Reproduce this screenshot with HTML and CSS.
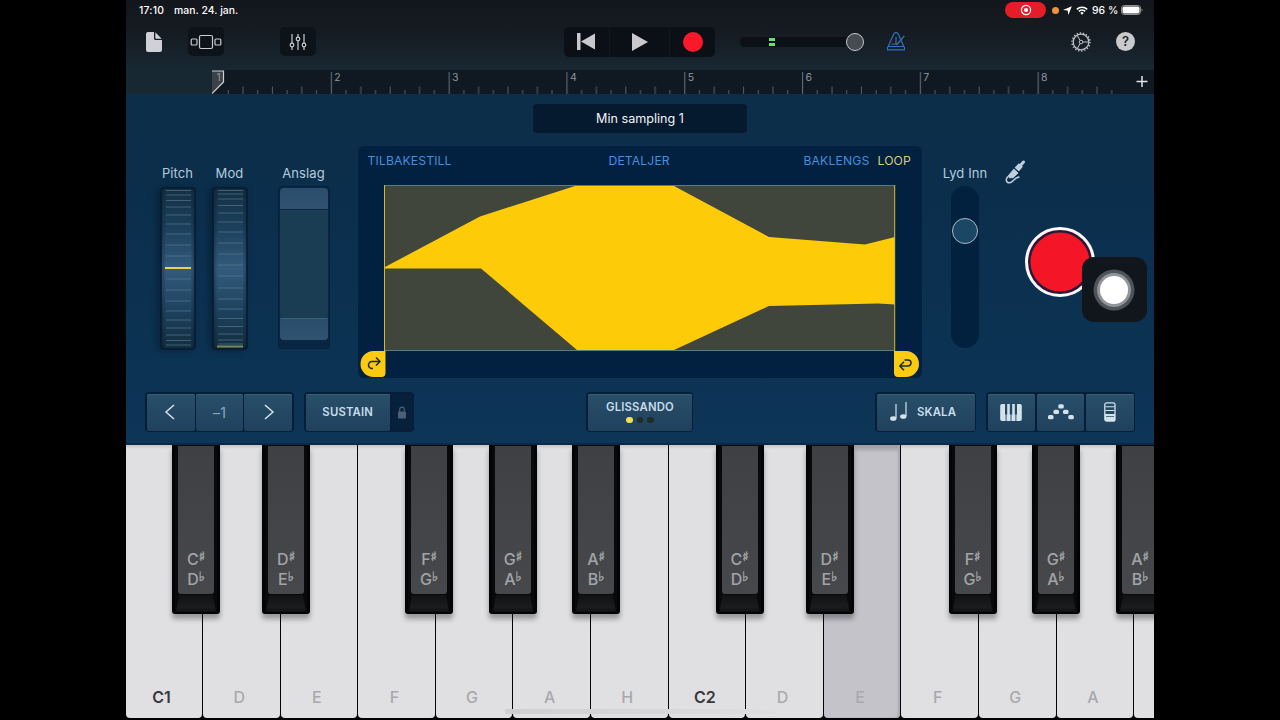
FILE: index.html
```html
<!DOCTYPE html>
<html lang="no">
<head>
<meta charset="utf-8">
<title>Min sampling 1</title>
<link rel="stylesheet" href="styles.css">
</head>
<body>
<div class="app">
  <header class="top">
    <div class="status">
      <span class="time">17:10</span><span class="date">man. 24. jan.</span>
      <span class="rec-pill"><svg width="12" height="12" viewBox="0 0 12 12"><circle cx="6" cy="6" r="4.6" fill="none" stroke="#fff" stroke-width="1.2"/><circle cx="6" cy="6" r="2.1" fill="#fff"/></svg></span>
      <span class="mic-dot"></span>
      <svg class="loc" width="9" height="9" viewBox="0 0 9 9"><path d="M8.800.2 5.400 9 4.600 4.600 0 4z" fill="#fff"/></svg>
      <svg class="wifi" width="12" height="9" viewBox="0 0 12 9" fill="none" stroke="#fff" stroke-width="1.5"><path d="M.8 3.400a7.400 7.400 0 0 1 10.400 0M2.800 5.400a4.600 4.600 0 0 1 6.400 0"/><path d="m6 8.800-1.700-1.900a2.500 2.500 0 0 1 3.400 0z" fill="#fff" stroke="none"/></svg>
      <span class="pct">96 %</span>
      <svg width="22" height="10" viewBox="0 0 22 10"><rect x=".5" y=".5" width="19" height="9" rx="2.600" fill="none" stroke="#8d9093"/><rect x="1.500" y="1.500" width="17" height="7" rx="1.700" fill="#fff"/><path d="M20.600 3.500v3q1-.5 1-1.500t-1-1.500" fill="#8d9093"/></svg>
    </div>
    <div class="toolbar">
      <svg class="doc" width="16" height="20" viewBox="0 0 16 20"><path d="M2 0h6v6.500Q8 8 9.500 8H16v10q0 2-2 2H2q-2 0-2-2V2q0-2 2-2z" fill="#cfd1d6"/><path d="M9.300.3 15.700 6.700H10.200Q9.300 6.700 9.300 5.800z" fill="#cfd1d6"/></svg>
      <span class="dark views"><svg width="32" height="16" viewBox="0 0 32 16" fill="none" stroke="#c9cbd0" stroke-width="1.200"><rect x="9.500" y="1.500" width="13" height="13" rx="1.500"/><rect x="1.200" y="5" width="5.800" height="6" rx="1"/><rect x="25" y="5" width="5.800" height="6" rx="1"/></svg></span>
      <span class="dark mixer"><svg width="18" height="18" viewBox="0 0 18 18" fill="none" stroke="#c9cbd0" stroke-width="1.200"><path d="M3 1v9M3 14v3M9 1v3M9 8v9M15 1v9M15 14v3"/><circle cx="3" cy="12" r="1.800"/><circle cx="9" cy="6" r="1.800"/><circle cx="15" cy="12" r="1.800"/></svg></span>
      <div class="transport">
        <span class="t1"><svg width="18" height="17" viewBox="0 0 18 17" fill="#c9c9cd"><path d="M0 0h3.500v17H0zM18 .5v16L4 8.500z"/></svg></span>
        <span class="t2"><svg width="16" height="18" viewBox="0 0 16 18"><path d="M0 0v18l16-9z" fill="#c9c9cd"/></svg></span>
        <span class="t3"><i class="rec"></i></span>
      </div>
      <div class="volume"><i class="led"></i><i class="vol-knob"></i></div>
      <svg class="metro" width="20" height="19" viewBox="0 0 20 19" fill="none" stroke="#2f70bd" stroke-width="1.200" stroke-linejoin="round"><path d="M1.500 17.800v-2.500l.8-1L8 1.600q.8-.9 2-.9t2 .9l5.700 12.700.8 1v2.500zM2 14.500h16"/><path d="M10 5v6.500M10.500 13 18.300 4M5.500 12h5" /></svg>
      <svg class="gear" width="20" height="20" viewBox="0 0 20 20" fill="none" stroke="#bfc3c8"><circle cx="10" cy="10" r="7.800" stroke-width="1.200"/><circle cx="10" cy="10" r="9" stroke-width="1.500" stroke-dasharray="1.300 1.842"/><circle cx="10" cy="10" r="1.800"/><path d="M12 10h5.700M9 8.400 6.200 3.300M9 11.600l-2.800 5.100"/></svg>
      <span class="help">?</span>
    </div>
    <div class="ruler">
      <svg class="ticks" width="942" height="24" viewBox="0 0 942 24">
        <defs><pattern id="bar" x="1" y="0" width="117.800" height="24" patternUnits="userSpaceOnUse"><path d="M.6 2v22" stroke="#66717a"/><path d="M15.200 20v4M44.700 20v4M74.100 20v4M103.500 20v4M30 16.500V24M59.400 16.500V24M88.800 16.500V24" stroke="#66717a" stroke-width=".8"/></pattern></defs>
        <path d="M9 0h898v24H9z" fill="url(#bar)"/>
        <path d="M0 1h12v11L0 24z" fill="#3b424a"/><path d="M0 1h11.500v11L0 23.500" fill="none" stroke="#cdd0d3" stroke-width="1.200"/>
        <path d="M924.500 11.500h11M930 6v11" stroke="#e2e4e6" stroke-width="1.500"/>
      </svg>
      <div class="bars"><span>1</span><span>2</span><span>3</span><span>4</span><span>5</span><span>6</span><span>7</span><span>8</span></div>
    </div>
  </header>

  <main class="instrument">
    <div class="name">Min sampling 1</div>
    <div class="controls">
      <div class="ctl">
        <span class="lbl">Pitch</span>
        <svg class="wheel" width="36" height="163" viewBox="0 0 36 163"><defs><linearGradient id="w" x2="0" y2="1"><stop stop-color="#142f42"/><stop offset=".25" stop-color="#1c405c"/><stop offset=".5" stop-color="#345b7c"/><stop offset=".78" stop-color="#1c405c"/><stop offset="1" stop-color="#122d3d"/></linearGradient><linearGradient id="e"><stop stop-color="#06182b" stop-opacity=".4"/><stop offset=".14" stop-color="#06182b" stop-opacity="0"/><stop offset=".86" stop-color="#06182b" stop-opacity="0"/><stop offset="1" stop-color="#06182b" stop-opacity=".4"/></linearGradient></defs><rect x="1" y="1" width="34" height="161" rx="3" fill="url(#w)"/><rect x="1" y="1" width="34" height="161" rx="3" fill="url(#e)" stroke="#071b30" stroke-width="1.500"/><path d="M6 3.500h25M6 8h25M6 13.500h25M6 20h25M6 28h25M6 37h25M6 47h25M6 58h25M6 69h25M6 92h25M6 103h25M6 114h25M6 124h25M6 133h25M6 141h25M6 148h25M6 153.500h25M6 158h25" stroke="#587b90" stroke-opacity=".65"/><path d="M5 81h26" stroke="#eed14c" stroke-width="2"/></svg>
      </div>
      <div class="ctl">
        <span class="lbl">Mod</span>
        <svg class="wheel" width="36" height="163" viewBox="0 0 36 163"><rect x="1" y="1" width="34" height="161" rx="3" fill="url(#w)"/><rect x="1" y="1" width="34" height="161" rx="3" fill="url(#e)" stroke="#071b30" stroke-width="1.500"/><path d="M6 3.500h25M6 7h25M6 12h25M6 18.500h25M6 26h25M6 35h25M6 45h25M6 56h25M6 67h25M6 78h25M6 89h25M6 101h25M6 112h25M6 122h25M6 131.500h25M6 139.500h25M6 147h25M6 153h25M6 157h25" stroke="#587b90" stroke-opacity=".65"/><path d="M5 159.500h26" stroke="#7c8754" stroke-width="2"/></svg>
      </div>
      <div class="ctl velocity">
        <span class="lbl">Anslag</span>
        <div class="range"><i class="cap"></i><i class="span"></i><i class="cap low"></i></div>
      </div>
      <section class="sample">
        <div class="sample-head"><span class="reset">TILBAKESTILL</span><span class="details">DETALJER</span><span class="reverse">BAKLENGS</span><span class="loop">LOOP</span></div>
        <svg class="wave" width="564" height="203" viewBox="358 175 564 203">
          <rect x="385" y="186" width="510" height="164" fill="#40463b"/>
          <path d="M385 267 480 216.500 575 186H674L769 237 865 244.500 895 237V304.500L878 303.500 769 306 674 350H577L481 268.500H385z" fill="#fdcb08"/>
          <path d="M385 185.500h510M385 350.500h510" stroke="#527e85"/>
          <path d="M384.500 185v180M894.700 185v180" stroke="#d6b92d"/>
          <path d="M385.500 351v22q0 4-4 4h-8a13 13 0 0 1 0-26zM894 351h12a13 13 0 0 1 0 26h-8q-4 0-4-4z" fill="#fbca11"/>
          <g fill="none" stroke="#1b2a2c" stroke-width="1.500"><path d="M373 368.500h-1a3.500 3.500 0 0 1 0-7H379.500M376 357.500l4 4-4 4"/><path d="M904.500 360h3.500a2.800 2.800 0 0 1 0 6H900M904 361.800l-4.200 4.200 4.200 4.200"/></g>
        </svg>
      </section>
      <div class="ctl input">
        <span class="lbl">Lyd Inn</span>
        <div class="gain"><i class="gain-knob"></i></div>
      </div>
      <div class="record">
        <svg class="jack" width="22" height="26" viewBox="0 0 22 26"><path d="m18.500 3-3.500 4" stroke="#c0cfdd" stroke-width="3" stroke-linecap="round"/><path d="m15.800 6-4.300 4.800" stroke="#c0cfdd" stroke-width="5.500"/><path d="m8.800 10.200 4.200 3.800-5 4.700H4.300l-1.300-1.500z" fill="#c0cfdd" stroke="#c0cfdd" stroke-linejoin="round"/><path d="M2.800 17.500C-.3 21 2 24.800 5.500 23.500S9.500 18.500 14.500 18" fill="none" stroke="#c0cfdd" stroke-width="1.500"/><path d="m9 8.800 5.500 4.700" stroke="#0b2b49"/></svg>
        <div class="big-rec"></div>
        <div class="touch"><i></i></div>
      </div>
    </div>
    <div class="buttons">
      <div class="group octave">
        <span><svg width="12" height="16" viewBox="0 0 12 16"><path d="M10 1 2 8l8 7"/></svg></span><span class="value">–1</span><span class="up"><svg width="12" height="16" viewBox="0 0 12 16"><path d="m2 1 8 7-8 7"/></svg></span>
      </div>
      <div class="group sustain"><span>SUSTAIN</span><span class="lock"><svg width="10" height="13" viewBox="0 0 10 13"><rect class="lock-body" x="1" y="5.500" width="8" height="7" rx="1"/><path class="shackle" d="M2.700 6V3.500a2.300 2.300 0 0 1 4.600 0V6"/></svg></span></div>
      <div class="group gliss"><span><b>GLISSANDO</b><em><i class="on"></i><i></i><i></i></em></span></div>
      <div class="group scale"><span><svg width="17" height="20" viewBox="0 0 17 20"><path d="M6 2v14M16 0v14" stroke-width="1.200"/><ellipse cx="3.300" cy="16.500" rx="3.200" ry="2.300" fill="#d4e2ec" stroke="none"/><ellipse cx="13.300" cy="14.500" rx="3.200" ry="2.300" fill="#d4e2ec" stroke="none"/></svg>SKALA</span></div>
      <div class="group modes">
        <span><svg width="22" height="17" viewBox="0 0 22 17"><path d="M2 0h3v10.500h2.200V0h2.600v10.500h2.400V0h2.600v10.500H17V0h3q1.800 0 1.800 1.800v13.400Q21.800 17 20 17H2Q.2 17 .2 15.200V1.800Q.2 0 2 0z" fill="#d4e2ec" stroke="none"/><path d="M6.100 10v7M11 10v7M15.900 10v7" stroke="#315472" stroke-width="1"/></svg></span>
        <span><svg width="26" height="16" viewBox="0 0 26 16"><g stroke="none" fill="#d4e2ec"><rect y="11" width="5.500" height="4.200" rx="1.500"/><rect x="5.500" y="5.700" width="5.500" height="4.200" rx="1.500"/><rect x="10.300" y=".3" width="5.500" height="4.200" rx="1.500"/><rect x="15" y="5.700" width="5.500" height="4.200" rx="1.500"/><rect x="20.300" y="11" width="5.500" height="4.200" rx="1.500"/></g></svg></span>
        <span><svg width="12" height="20" viewBox="0 0 12 20"><rect x=".8" y=".8" width="10.200" height="18.400" rx="2" stroke-width="1.300"/><path d="M1.500 4.800h9M1.500 8.500h9" stroke-width="1.100"/><path d="M1 12h10v7H1z" fill="#d4e2ec" stroke="none"/><path d="M2 14.500h8" stroke="#527186" stroke-width="1"/></svg></span>
      </div>
    </div>
  </main>

  <div class="keyboard">
    <div class="white first root">C1</div><div class="white">D</div><div class="white">E</div><div class="white">F</div><div class="white">G</div><div class="white">A</div><div class="white">H</div><div class="white root">C2</div><div class="white">D</div><div class="white pressed">E</div><div class="white">F</div><div class="white">G</div><div class="white">A</div><div class="white"></div>
    <div class="black" style="left:46px"><div><p>C<sup>♯</sup></p><p>D<sup>♭</sup></p></div></div>
    <div class="black" style="left:136px"><div><p>D<sup>♯</sup></p><p>E<sup>♭</sup></p></div></div>
    <div class="black" style="left:279px"><div><p>F<sup>♯</sup></p><p>G<sup>♭</sup></p></div></div>
    <div class="black" style="left:363px"><div><p>G<sup>♯</sup></p><p>A<sup>♭</sup></p></div></div>
    <div class="black" style="left:446px"><div><p>A<sup>♯</sup></p><p>B<sup>♭</sup></p></div></div>
    <div class="black" style="left:589.5px"><div><p>C<sup>♯</sup></p><p>D<sup>♭</sup></p></div></div>
    <div class="black" style="left:679.5px"><div><p>D<sup>♯</sup></p><p>E<sup>♭</sup></p></div></div>
    <div class="black" style="left:822.5px"><div><p>F<sup>♯</sup></p><p>G<sup>♭</sup></p></div></div>
    <div class="black" style="left:906px"><div><p>G<sup>♯</sup></p><p>A<sup>♭</sup></p></div></div>
    <div class="black" style="left:990px"><div><p>A<sup>♯</sup></p><p>B<sup>♭</sup></p></div></div>
    <div class="home"></div>
  </div>
</div>
</body>
</html>
```
FILE: styles.css
```css
* { box-sizing: border-box; }
body { margin: 0; background: #000; font-family: Inter, "Liberation Sans", sans-serif; }
svg { display: block; flex: none; }
i, em, b { font-style: normal; display: block; }
.app { width: 1028px; height: 720px; margin-left: 126px; overflow: hidden; background: #000; display: flex; flex-direction: column; }

.top { height: 94px; background: linear-gradient(#13171c, #151b22 35%, #182832 75%); }
.status { height: 20px; padding: 0 10px 0 13px; display: flex; align-items: center; color: #fff; font-size: 10.4px; font-weight: 500; white-space: nowrap; }
.time { width: 35px; flex: none; letter-spacing: .2px; }
.date { width: 831px; flex: none; letter-spacing: .05px; }
.rec-pill { width: 41px; height: 16px; border-radius: 8px; background: #e41d29; display: flex; align-items: center; justify-content: center; flex: none; }
.mic-dot { width: 7px; height: 7px; border-radius: 50%; background: #ec943b; margin-left: 6px; flex: none; }
.loc { margin-left: 4px; }
.wifi { margin-left: 4px; }
.pct { margin-left: 4px; width: 29px; flex: none; letter-spacing: .05px; }

.toolbar { height: 50px; display: flex; align-items: center; padding: 0 19px 7px 20px; }
.dark { height: 29px; border-radius: 5px; background: #0c1319; display: flex; align-items: center; justify-content: center; }
.views { width: 36px; margin-left: 26px; }
.mixer { width: 36px; margin-left: 56px; }
.transport { margin-left: 248px; width: 151px; height: 30px; border-radius: 5px; background: #0b1016; display: flex; flex: none; }
.transport span { display: flex; align-items: center; justify-content: center; }
.transport svg, .rec { flex: none; }
.t1 { width: 46px; border-right: 1px solid #11181f; padding-right: 1px; }
.t2 { width: 60px; border-right: 1px solid #11181f; }
.t3 { width: 45px; }
.rec { width: 20px; height: 20px; border-radius: 50%; background: #fb1828; }
.volume { margin-left: 24px; width: 125px; height: 19px; display: flex; align-items: center; justify-content: space-between; padding-left: 30px; background: radial-gradient(circle at 5px 5px, #0c1117 5px, transparent 5.500px) 1px 5px / 10px 10px no-repeat, linear-gradient(#0c1117, #0c1117) 6px 5px / 112px 10px no-repeat; }
.led { width: 6px; height: 8px; background: linear-gradient(#6fdd75 3px, #0c1117 3px 5px, #6fdd75 5px); }
.vol-knob { width: 18px; height: 18px; border-radius: 50%; border: 1px solid #c4c7c9; background: #454c51; }
.metro { margin-left: 22px; }
.gear { margin-left: auto; }
.help { margin-left: 25px; width: 19px; height: 19px; border-radius: 50%; background: #c9cace; color: #202429; font-size: 13px; font-weight: 600; line-height: 19px; text-align: center; }

.ruler { height: 24px; margin-left: 86px; background: #101922; display: grid; }
.ruler > * { grid-area: 1 / 1; }
.bars { display: flex; padding-left: 4.500px; color: #8d969c; font-size: 10.5px; line-height: 15px; }
.bars span { width: 117.8px; flex: none; }

.instrument { height: 351px; background: linear-gradient(#0d2e48, #0b2e4c 30%, #0d3557); border-bottom: 2px solid #0a2a48; }
.name { width: 214px; height: 29px; margin: 10px auto 0; border-radius: 4px; background: #051a2f; color: #f2f5f8; font-size: 12.6px; line-height: 29px; text-align: center; }
.controls { display: flex; height: 232px; margin-top: 13px; padding-left: 26px; }
.ctl { width: 52px; padding-top: 18px; display: flex; flex-direction: column; align-items: center; flex: none; }
.lbl { height: 22px; margin-right: 1px; font-size: 13px; line-height: 18px; color: #b4cadf; white-space: nowrap; letter-spacing: .1px; }
.wheel { filter: drop-shadow(-3px 1px 3px rgba(3, 17, 30, .45)); margin-top: .5px; }
.velocity { margin-left: 22px; width: 52px; }
.range { width: 52px; height: 163px; border: 1.500px solid #08213b; border-radius: 4px; background: #082544; display: flex; flex-direction: column; padding: 1px; }
.cap { height: 22px; background: linear-gradient(#294d6c, #315371); border-radius: 4px 4px 1px 1px; border-bottom: 1px solid #0b263d; }
.span { height: 108px; background: #1b3d54; }
.low { border: 0; border-top: 1px solid #3b6078; border-radius: 1px 1px 4px 4px; }
.sample { width: 564px; height: 232px; margin-left: 28px; border-radius: 6px; background: #02203f; flex: none; }
.sample-head { height: 29px; padding: 0 9.500px; display: flex; align-items: center; font-size: 12.2px; color: #4590db; letter-spacing: .12px; }
.reset { width: 241px; }
.details { width: 195px; }
.reverse { width: 74px; }
.loop { color: #d9cc7c; }
.input { margin-left: 17px; }
.input .lbl { margin-right: 0; }
.gain { width: 28px; height: 162px; border-radius: 14px; background: #02213f; padding: 32px 1px 0; }
.gain-knob { width: 26px; height: 26px; border-radius: 50%; border: 1px solid #a5bac7; background: #194764; }
.record { position: relative; padding: 13px 0 0 14px; flex: none; }
.big-rec { margin: 42px 0 0 20px; width: 70px; height: 70px; border-radius: 50%; border: 3px solid #f8fbfd; background: #f41526; box-shadow: inset 0 0 0 2.500px #251a3b; }
.touch { position: absolute; left: 91px; top: 111px; width: 65px; height: 65px; border-radius: 12px; background: #11151c; display: flex; align-items: center; justify-content: center; }
.touch i { width: 28px; height: 28px; margin-right: 1px; border-radius: 50%; background: #fff; box-shadow: 0 0 0 3px #90959b, 0 0 0 6.500px #4e535a; }

.buttons { display: flex; margin-top: 14px; padding-left: 19px; }
.group { display: flex; height: 40px; padding: 1.500px; gap: 1.500px; border-radius: 4px; background: #061e38; flex: none; }
.group > span { display: flex; align-items: center; justify-content: center; flex: 1; border-radius: 2px; background: linear-gradient(#294f69, #1f415e); box-shadow: inset 0 1px #386078; color: #c9dde9; font-size: 11.3px; font-weight: 600; letter-spacing: .2px; }
.group svg { fill: none; stroke: #d4e2ec; stroke-width: 1.500; }
.group .lock-body { fill: #4d6078; stroke: none; }
.group .shackle { stroke: #4d6078; stroke-width: 1.200; }
.octave { width: 149px; }
.octave > span:first-child { padding-right: 2px; }
.octave > .up { padding-left: 2px; }
.group .value { font-size: 14px; font-weight: 400; color: #8ba9bd; }
.sustain { width: 110px; margin-left: 10px; }
.group > .lock { flex: 0 0 21px; background: #07203b; box-shadow: none; padding-right: 1px; }
.gliss { width: 107px; margin-left: 172px; }
.gliss > span { flex-direction: column; gap: 3px; padding-left: 1px; }
.gliss b { font-weight: 600; line-height: 13px; }
.gliss em { display: flex; gap: 4px; }
.gliss i { width: 6.500px; height: 6.500px; border-radius: 50%; background: #202c24; }
.gliss .on { background: #eee358; }
.scale { width: 101px; margin-left: 182px; }
.scale > span { gap: 10px; padding-right: 5px; }
.modes { width: 149px; margin-left: 10px; }

.keyboard { position: relative; display: flex; height: 273px; overflow: hidden; background: #050607; }
.white { width: 76.600px; height: 273px; margin-right: 1px; flex: none; border-radius: 0 0 4px 4px; background: linear-gradient(#c5c5c8, #e0e0e3 4px); color: #a9a9ad; font-size: 16px; font-weight: 500; line-height: 20px; text-align: center; padding: 242px 4px 0 0; }
.first { width: 76px; padding-right: 5px; }
.root { color: #38383c; font-weight: 600; }
.pressed { background: linear-gradient(#96969c, #c4c3ca 8px); box-shadow: inset -2px 0 2px #aaa9af; }
.black { position: absolute; top: 0; width: 48px; height: 169px; border-radius: 0 0 3px 3px; background: #08090a; border: solid #030405; border-width: 0 3px 2px; box-shadow: 0 5px 5px rgba(20, 20, 25, .35); padding: 1px 3px 0; }
.black::after { content: ""; display: block; height: 17px; margin: 1px -2px 0; background: linear-gradient(#111214, #1b1c1e 12px, #101113); clip-path: polygon(3px 0, calc(100% - 3px) 0, 100% 100%, 0 100%); }
.black div { height: 148px; border-radius: 0 0 3px 3px; background: linear-gradient(#3e4043, #46484b); color: #a2a4a7; font-size: 16px; font-weight: 500; line-height: 20px; padding-top: 103px; text-align: center; }
.black p { margin: 0; white-space: nowrap; }
.black sup { font-family: "DejaVu Sans", sans-serif; font-size: 13px; line-height: 0; vertical-align: 4px; -webkit-text-stroke: .5px #a2a4a7; }
.home { position: absolute; left: 379px; top: 264px; width: 270px; height: 5px; border-radius: 2px; background: linear-gradient(90deg, #cfcfd2, #dedee0); }
```
